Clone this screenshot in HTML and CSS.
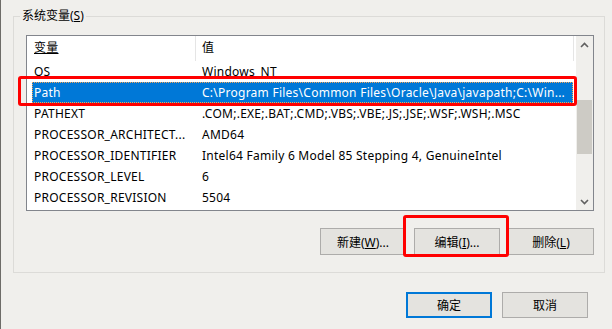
FILE: index.html
```html
<!DOCTYPE html>
<html>
  <head>
    <title>系统变量</title>
    <link rel="stylesheet" href="styles.css">
  </head>
  <body>
    <fieldset class="group">
      <legend>系统变量(<u>S</u>)</legend>
      <div class="group-body">
        <div class="list">
          <div class="table">
            <div class="head">
              <div class="head-name"><u>变量</u></div>
              <div class="head-value">值</div>
            </div>
            <div class="row"><div class="name">OS</div><div class="value">Windows_NT</div></div>
            <div class="row selected"><div class="name">Path</div><div class="value">C:\Program Files\Common Files\Oracle\Java\javapath;C:\Win...</div></div>
            <div class="row"><div class="name">PATHEXT</div><div class="value">.COM;.EXE;.BAT;.CMD;.VBS;.VBE;.JS;.JSE;.WSF;.WSH;.MSC</div></div>
            <div class="row"><div class="name">PROCESSOR_ARCHITECT...</div><div class="value">AMD64</div></div>
            <div class="row"><div class="name">PROCESSOR_IDENTIFIER</div><div class="value">Intel64 Family 6 Model 85 Stepping 4, GenuineIntel</div></div>
            <div class="row"><div class="name">PROCESSOR_LEVEL</div><div class="value">6</div></div>
            <div class="row"><div class="name">PROCESSOR_REVISION</div><div class="value">5504</div></div>
          </div>
          <div class="scroll">
            <div class="arrow">
              <svg width="9" height="6" viewBox="0 0 9 6"><path d="M1 5 L4.5 1.5 L8 5" fill="none" stroke="#606060" stroke-width="1.6"/></svg>
            </div>
            <div class="track"><div class="thumb"></div></div>
            <div class="arrow">
              <svg width="9" height="6" viewBox="0 0 9 6"><path d="M1 1 L4.5 4.5 L8 1" fill="none" stroke="#606060" stroke-width="1.6"/></svg>
            </div>
          </div>
        </div>
        <div class="actions">
          <button type="button">新建(<u>W</u>)...</button>
          <button type="button">编辑(<u>I</u>)...</button>
          <button type="button">删除(<u>L</u>)</button>
        </div>
      </div>
    </fieldset>

    <div class="footer">
      <button type="button" class="default">确定</button>
      <button type="button">取消</button>
    </div>

    <!-- red highlight marks drawn over the dialog -->
    <div class="mark mark-row"></div>
    <div class="mark mark-edit"></div>
  </body>
</html>
```

FILE: styles.css
```css
body {
  position: relative;
  margin: 0;
  width: 612px;
  height: 329px;
  box-sizing: border-box;
  border-left: 1px solid #6d6c68;
  background-color: #f0efec;
  font-family: "Noto Sans", "Noto Sans CJK SC", sans-serif;
  font-size: 12px;
  color: #000;
  overflow: hidden;
}

.group {
  margin: 8px 7px 0 12px;
  padding: 0;
  min-width: 0;
  border: 1px solid #dcdbd8;
}

.group legend {
  margin-left: 6px;
  padding: 0 2px;
  line-height: 16px;
}

.group-body {
  padding: 11px 10px 17px 12px;
}

.list {
  display: flex;
  height: 176px;
  box-sizing: border-box;
  border: 1px solid #82858c;
  background: #fff;
}

.table {
  flex: 1;
  overflow: hidden;
  white-space: nowrap;
  letter-spacing: 0.25px;
}

.head {
  display: flex;
  height: 25px;
  line-height: 24px;
}

.head-name {
  width: 161px;
  padding-left: 7px;
  border-right: 1px solid #e5e5e5;
}

.head-value {
  width: 371px;
  padding-left: 6px;
  border-right: 1px solid #e5e5e5;
}

.row {
  display: grid;
  grid-template-columns: 163px 1fr;
  width: 541px;
  height: 21px;
  margin-left: 5px;
  line-height: 21px;
  box-sizing: border-box;
}

.row .name {
  padding-left: 2px;
  overflow: hidden;
}

.row .value {
  padding-left: 7px;
  overflow: hidden;
}

.row.selected {
  background-color: #0078d7;
  color: #fff;
  outline: 1px dotted #f3a65a;
  outline-offset: -1px;
}

.scroll {
  display: flex;
  flex-direction: column;
  width: 17px;
  background-color: #f0efec;
}

.arrow {
  display: flex;
  align-items: center;
  justify-content: center;
  height: 17px;
}

.track {
  flex: 1;
}

.thumb {
  width: 15px;
  height: 54px;
  margin: 47px auto 0;
  background-color: #cdcbc5;
}

.actions {
  display: flex;
  justify-content: flex-end;
  gap: 8px;
  margin-top: 17px;
}

button {
  width: 86px;
  height: 27px;
  padding: 0;
  border: 1px solid #adacaa;
  background-color: #e4e3df;
  font-family: inherit;
  font-size: 12px;
  color: #000;
}

.footer {
  display: flex;
  justify-content: flex-end;
  gap: 10px;
  margin-top: 19px;
  padding-right: 24px;
}

.footer button {
  height: 26px;
}

.footer .default {
  border: 2px solid #0078d7;
}

.mark {
  position: absolute;
  box-sizing: border-box;
  border: 3px solid #f00;
  border-radius: 3px;
}

.mark-row {
  left: 17px;
  top: 76px;
  width: 559px;
  height: 30px;
}

.mark-edit {
  left: 402px;
  top: 215px;
  width: 106px;
  height: 42px;
}
```
